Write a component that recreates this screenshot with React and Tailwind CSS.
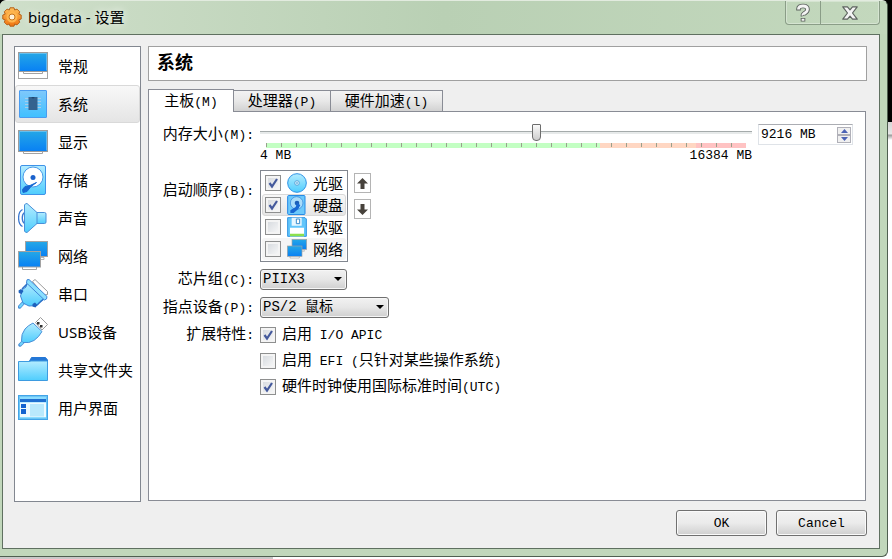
import React, { useState } from "react";

const SANS = "font-['Noto_Sans','Noto_Sans_CJK_SC',sans-serif]";
const MONO = "font-['Liberation_Mono','Noto_Sans_CJK_SC',monospace]";

// Sets the Latin runs of a mixed label in the narrower monospaced face.
function Mixed({ text }) {
  return text.split(/([ -~]+)/).filter(Boolean).map((run, i) =>
    /^[ -~]/.test(run) ? (
      <span key={i} className={"text-[13px] leading-none whitespace-pre " + MONO}>{run}</span>
    ) : (
      run
    )
  );
}

function Defs() {
  return (
    <svg width="0" height="0" className="absolute" aria-hidden="true">
      <defs>
        <linearGradient id="screen" x1="0" y1="0" x2="0" y2="1">
          <stop offset="0" stopColor="#25a8e6" />
          <stop offset="1" stopColor="#0880f4" />
        </linearGradient>
        <linearGradient id="sky" x1="0" y1="0" x2="0" y2="1">
          <stop offset="0" stopColor="#b4ecff" />
          <stop offset="1" stopColor="#4fcdfd" />
        </linearGradient>
        <linearGradient id="chip" x1="0" y1="0" x2="0" y2="1">
          <stop offset="0" stopColor="#7fc8fb" />
          <stop offset="1" stopColor="#3fc0ff" />
        </linearGradient>
        <linearGradient id="gear" x1="0" y1="0" x2="0" y2="1">
          <stop offset="0" stopColor="#ffc05a" />
          <stop offset="1" stopColor="#ef7410" />
        </linearGradient>
      </defs>
    </svg>
  );
}

const art = {
  general: (
    <>
      <rect x="0.5" y="20.5" width="29" height="7" fill="#fff" stroke="#a3a3a3" />
      <path d="M5.5 20.5v2h19v-2" fill="#fff" stroke="#a3a3a3" />
      <rect x="0.5" y="1.5" width="29" height="19" fill="url(#screen)" stroke="#9c9c9c" />
      <path d="M1.5 19.5v-17h27v17" fill="none" stroke="#8ed0f4" strokeWidth="0.6" />
    </>
  ),
  system: (
    <>
      <rect x="1.5" y="1.5" width="27" height="27" rx="0.5" fill="url(#chip)" stroke="#4a9cf0" />
      <path d="M7 9.5h16M7 12.5h16M7 15.5h16M7 18.5h16" stroke="#a5cdea" />
      <rect x="10.5" y="8" width="9" height="13" fill="#34628f" />
      <path d="M13.500 8a1.500 1.500 0 0 0 3 0z" fill="#1f4670" />
    </>
  ),
  display: (
    <>
      <path d="M5.500 24.500v2h19v-2" fill="#fff" stroke="#a3a3a3" />
      <rect x="0.5" y="3.5" width="29" height="21" fill="url(#screen)" stroke="#9c9c9c" />
      <path d="M1.500 23.500v-19h27v19" fill="none" stroke="#8ed0f4" strokeWidth="0.6" />
    </>
  ),
  storage: (
    <>
      <rect x="2.5" y="0.500" width="25" height="29" rx="1.500" fill="url(#sky)" stroke="#3f93e8" />
      <circle cx="15" cy="12" r="10" fill="#fff" stroke="#4a9ae8" />
      <circle cx="15" cy="12.500" r="2.500" fill="#1b62cc" />
      <path d="M18.500 17.500 13 21.500 9 26.500 5 27.500 4.500 24.500 7 21.500 12 20.500z" fill="#1768d2" stroke="#1768d2" strokeLinejoin="round" />
    </>
  ),
  audio: (
    <>
      <path d="M4.500 6.500C-0.700 9-0.700 21 4.500 23.500M6.500 9.500c-3 2-3 9 0 11" fill="none" stroke="#3b78d0" strokeWidth="1.300" />
      <path d="M18.500 9.500h8q1.500 0 1.500 1.500v8q0 1.500-1.500 1.500h-8z" fill="url(#sky)" stroke="#4a90d8" />
      <path d="M6.500 2Q7 .5 9 .5L19 9.500v11L9 29.500q-2 0-2.500-1.500z" fill="url(#sky)" stroke="#4a90d8" strokeLinejoin="round" />
    </>
  ),
  network: (
    <>
      <rect x="7.500" y="0.500" width="22" height="15" fill="url(#screen)" stroke="#a3a3a3" />
      <path d="M19 16.500h7v2h-7z" fill="#fff" stroke="#a3a3a3" strokeWidth="0.800" />
      <path d="M4.500 26v2.500h14V26" fill="#fff" stroke="#a3a3a3" />
      <rect x="0.500" y="10.500" width="22" height="15.500" fill="url(#screen)" stroke="#a3a3a3" />
    </>
  ),
  serial: (
    <>
      <path d="M14.500 2.500 17 .5 29.500 12.500v3L26 16z" fill="#fff" stroke="#9b9b9b" />
      <path d="M6.500 22.500 1.500 28" stroke="#4a90d8" strokeWidth="3.500" strokeLinecap="round" />
      <path d="M6.500 22.500 2 27.500" stroke="#73d6fd" strokeWidth="2" strokeLinecap="round" />
      <path d="M9 5 7 12 3 15" fill="none" stroke="#2d73c8" strokeWidth="1.500" />
      <path d="M9 3.500 26.500 20 22 22.500 19 26.500 11 27 5 24 2.500 17 4.500 10.500 8 8z" fill="url(#sky)" stroke="#3f87d8" strokeLinejoin="round" />
      <path d="M9 .8 11 .5 29 17.500 28.500 20 26.500 21 8.500 4z" fill="#8adffe" stroke="#3f87d8" strokeLinejoin="round" />
      <path d="M.5 11.500 3 10l2.500 2L3.500 15 .8 14zM14.500 25l2.500-1.500 2.500 2.500-2 2.500-3-1z" fill="#1f62bd" />
      <path d="M9 5 4 10M25 20.500 19 26" stroke="#2d73c8" strokeWidth="1.500" />
    </>
  ),
  usb: (
    <>
      <path d="M17.500 5.500 22.500 .5 29.500 7.500 24 13z" fill="#fff" stroke="#9b9b9b" />
      <rect x="19" y="5" width="2.500" height="2.500" fill="#333" />
      <rect x="22" y="8" width="2.500" height="2.500" fill="#333" />
      <path d="M6 24 2 28" stroke="#4a90d8" strokeWidth="3.500" strokeLinecap="round" />
      <path d="M6 24 2.500 27.500" stroke="#73d6fd" strokeWidth="2" strokeLinecap="round" />
      <path d="M15 6 24 14.500Q21 20 16 23.500 11 26.500 5 25.500L3.500 24Q3 17 7 12 10 8.500 15 6z" fill="url(#sky)" stroke="#4a90d8" strokeLinejoin="round" />
    </>
  ),
  folder: (
    <>
      <path d="M11 7 13.500 2.500H27.500L29.500 5v3z" fill="#2477d6" stroke="#2477d6" />
      <path d="M.5 6.500h10.500l2-.5h16.500v19.500H.5z" fill="url(#sky)" stroke="#3d9be0" />
    </>
  ),
  ui: (
    <>
      <rect x="0.500" y="2.500" width="29" height="24" fill="#8bdcff" stroke="#43a4e8" />
      <rect x="1.500" y="3.500" width="27" height="22" fill="none" stroke="#6cc6f4" />
      <rect x="2" y="6" width="26" height="3" fill="#1f6fd0" />
      <rect x="2" y="9.500" width="26" height="14.500" fill="#eefaff" />
      <path d="M3 11h5v4H3zM3 16h5v5H3z" fill="#1463cf" />
      <rect x="12" y="11" width="14" height="12.500" fill="#b9e9fc" />
    </>
  ),
  disc: (
    <>
      <circle cx="15" cy="15" r="14" fill="url(#sky)" stroke="#2e93e6" strokeWidth="1.500" />
      <circle cx="15" cy="15" r="3.500" fill="#d9f4ff" stroke="#5fa6d8" strokeWidth="1.500" />
      <circle cx="15" cy="15" r="1.200" fill="#3388c8" />
    </>
  ),
  disk: (
    <>
      <rect x="1" y="0.800" width="26" height="28.500" rx="1.500" fill="#6cc9fb" stroke="#2388e6" strokeWidth="1.500" />
      <circle cx="14.500" cy="12" r="9.500" fill="#a8dcfa" stroke="#3b8bdc" strokeWidth="1.200" />
      <circle cx="15" cy="12" r="3.500" fill="#1b5fb8" />
      <path d="M15 12 20 15 17 21 10 27H5v-4l8-5z" fill="#1768d2" />
    </>
  ),
  floppy: (
    <>
      <path d="M1 1h26l2 2v26H1z" fill="#62c6fb" stroke="#2f94e2" strokeWidth="1.500" />
      <path d="M7 1h15v12H7z" fill="#e8f7ff" />
      <path d="M14 3h5v7h-5z" fill="#fff" stroke="#3a8ccc" strokeWidth="1.500" />
      <path d="M4.500 16h21v13h-21z" fill="#fff" />
      <path d="M4.500 25h21v4h-21z" fill="#8be04e" />
    </>
  ),
};

function Icon({ name, className }) {
  return (
    <svg viewBox="0 0 30 30" className={"shrink-0 " + className} aria-hidden="true">
      {art[name]}
    </svg>
  );
}

const categories = [
  ["general", "常规"],
  ["system", "系统"],
  ["display", "显示"],
  ["storage", "存储"],
  ["audio", "声音"],
  ["network", "网络"],
  ["serial", "串口"],
  ["usb", "USB设备"],
  ["folder", "共享文件夹"],
  ["ui", "用户界面"],
];

const bootDevices = [
  ["disc", "光驱", true, "border-transparent"],
  ["disk", "硬盘", true, "border-[#d9d9d9] bg-linear-to-b from-[#f8f8f8] to-[#e6e6e6]"],
  ["floppy", "软驱", false, "border-transparent"],
  ["network", "网络", false, "border-transparent bg-[#f5f5f5]"],
];

function TickBox({ id, checked }) {
  return (
    <span className="relative size-4 shrink-0">
      <input
        id={id}
        type="checkbox"
        defaultChecked={checked}
        className="peer block size-4 appearance-none border border-[#8e8f8f] bg-linear-to-br from-[#d3d7dc] to-[#fafafa] shadow-[inset_0_0_0_2px_#f4f4f4]"
      />
      <svg viewBox="0 0 16 16" className="pointer-events-none absolute inset-0 hidden size-4 peer-checked:block" aria-hidden="true">
        <path d="M4.500 8 7 11.500 12 4" fill="none" stroke="#44599c" strokeWidth="2.200" />
      </svg>
    </span>
  );
}

function Select({ id, width, children }) {
  return (
    <span className={"relative block " + width}>
      <select
        id={id}
        className={"block h-[21px] w-full appearance-none rounded-[3px] border border-[#707070] bg-linear-to-b from-[#f2f2f2] via-[#e6e6e6] to-[#cfcfcf] pl-0.5 text-[14px] leading-[19px] shadow-[inset_0_0_0_1px_#f6f6f6] " + MONO}
      >
        {children}
      </select>
      <svg viewBox="0 0 8 4" className="pointer-events-none absolute top-2 right-[5px] h-1 w-2" aria-hidden="true">
        <path d="M0 0h8L4 4z" fill="#000" />
      </svg>
    </span>
  );
}

function Row({ label, htmlFor, labelClass = "leading-[21px]", children }) {
  return (
    <div className="flex items-start gap-1.5">
      <label htmlFor={htmlFor} className={"w-[105px] shrink-0 text-right " + labelClass}>
        <Mixed text={label} />
      </label>
      {children}
    </div>
  );
}

function MoveButton({ label, down }) {
  return (
    <button type="button" aria-label={label} className="grid h-5 w-[17px] place-items-center border border-[#b4b4b4] bg-white">
      <svg viewBox="0 0 11 11" className={"size-[11px] " + (down ? "rotate-180" : "")} aria-hidden="true">
        <path d="M5.500 0 11 5.500H7.500V11h-4V5.500H0z" fill="#47423c" />
      </svg>
    </button>
  );
}

function Feature({ id, checked, text }) {
  return (
    <div className="flex h-[19px] items-center gap-1.5 leading-[19px]">
      <TickBox id={id} checked={checked} />
      <label htmlFor={id}>
        <Mixed text={text} />
      </label>
    </div>
  );
}

function MotherboardPage() {
  const [memory, setMemory] = useState(9216);
  return (
    <div className="mr-px mb-px flex flex-1 flex-col gap-[7px] border border-[#898c95] bg-white pt-3 pr-3">
      <Row label="内存大小(M):" htmlFor="memory">
        <div className="flex h-[39px] min-w-0 flex-1 flex-col">
          <input
            id="memory"
            type="range"
            min="4"
            max="16384"
            value={memory}
            onChange={(e) => setMemory(Number(e.target.value))}
            className="block h-[17px] w-full shrink-0 appearance-none bg-transparent [&::-webkit-slider-runnable-track]:h-[3px] [&::-webkit-slider-runnable-track]:border-t [&::-webkit-slider-runnable-track]:border-[#a5abab] [&::-webkit-slider-runnable-track]:bg-[#e7eaea] [&::-webkit-slider-thumb]:-mt-2 [&::-webkit-slider-thumb]:h-[17px] [&::-webkit-slider-thumb]:w-[9px] [&::-webkit-slider-thumb]:appearance-none [&::-webkit-slider-thumb]:rounded-t-[1px] [&::-webkit-slider-thumb]:rounded-b-[4px] [&::-webkit-slider-thumb]:border [&::-webkit-slider-thumb]:border-[#6d6d6d] [&::-webkit-slider-thumb]:bg-linear-to-b [&::-webkit-slider-thumb]:from-[#fafafa] [&::-webkit-slider-thumb]:to-[#cdcdcd]"
          />
          <div className="mx-1.5 mt-0.5 h-[5px] shrink-0 bg-[linear-gradient(to_right,#c3ffc3_69.5%,#ffd7c3_69.5%,#ffd7c3_89.5%,#ffc3c3_89.5%)]">
            <div className="h-1 bg-[repeating-linear-gradient(to_right,#98a08c_0,#98a08c_1px,transparent_1px,transparent_15px)]" />
          </div>
          <div className={"flex justify-between text-[13px] leading-4 " + MONO}>
            <span>4 MB</span>
            <span>16384 MB</span>
          </div>
        </div>
        <div className="flex h-[21px] w-[95px] shrink-0 items-center border border-[#dfe3e8] border-t-[#abadb3] bg-white pr-px">
          <input type="text" aria-label="内存大小" value={memory + " MB"} readOnly className={"w-0 min-w-0 flex-1 pl-0.5 text-[13px] outline-none " + MONO} />
          <div className="flex w-[14px] flex-col">
            <button type="button" aria-label="增加" onClick={() => setMemory(memory + 4)} className="grid h-2 place-items-center border border-[#b0b0b8] bg-[#f0f0f0]">
              <svg viewBox="0 0 7 4" className="h-1 w-[7px]" aria-hidden="true"><path d="M0 4h7L3.500 0z" fill="#4b62b4" /></svg>
            </button>
            <button type="button" aria-label="减少" onClick={() => setMemory(memory - 4)} className="grid h-2 place-items-center border border-[#b0b0b8] bg-[#f0f0f0]">
              <svg viewBox="0 0 7 4" className="h-1 w-[7px]" aria-hidden="true"><path d="M0 0h7L3.500 4z" fill="#4b62b4" /></svg>
            </button>
          </div>
        </div>
      </Row>

      <Row label="启动顺序(B):" htmlFor="boot-disc" labelClass="pt-2.5 leading-[21px]">
        <ul className={"w-[88px] border border-[#828790] bg-white p-px text-[15px] " + SANS}>
          {bootDevices.map(([icon, name, checked, look]) => (
            <li key={icon} className={"flex h-[22px] items-center rounded-[3px] border pl-0.5 " + look}>
              <TickBox id={"boot-" + icon} checked={checked} />
              <label htmlFor={"boot-" + icon} className="flex items-center gap-1.5 pl-1.5 leading-5">
                <Icon name={icon} className="size-5" />
                {name}
              </label>
            </li>
          ))}
        </ul>
        <div className="flex flex-col gap-1.5 pt-[3px]">
          <MoveButton label="上移" />
          <MoveButton label="下移" down />
        </div>
      </Row>

      <Row label="芯片组(C):" htmlFor="chipset">
        <Select id="chipset" width="w-[87px]">
          <option>PIIX3</option>
        </Select>
      </Row>

      <Row label="指点设备(P):" htmlFor="pointing">
        <Select id="pointing" width="w-[129px]">
          <option>PS/2 鼠标</option>
        </Select>
      </Row>

      <Row label="扩展特性:" htmlFor="apic" labelClass="leading-[19px]">
        <div className="flex flex-col gap-[7px]">
          <Feature id="apic" checked text="启用 I/O APIC" />
          <Feature id="efi" text="启用 EFI (只针对某些操作系统)" />
          <Feature id="utc" checked text="硬件时钟使用国际标准时间(UTC)" />
        </div>
      </Row>
    </div>
  );
}

function TitleBar() {
  return (
    <header className={"flex h-[33px] items-start justify-between bg-linear-to-r from-[#cfdfca] via-[#b9d0b4] to-[#c3d8bd] pr-[7px] " + SANS}>
      <div className="flex h-8 items-center gap-1 pl-0.5">
        <svg viewBox="0 0 20 20" className="size-5" aria-hidden="true">
          <path
            d="M8 .8h4l.7 2.200 2.300-.9 2.700 2.700-.9 2.300 2.400.9v4l-2.400.9.9 2.300-2.700 2.700-2.300-.9-.7 2.200H8l-.7-2.200-2.300.9-2.700-2.700.9-2.300L.8 12V8l2.400-.9-.9-2.300L5 2.100l2.300.9z"
            fill="url(#gear)" stroke="#b5621b" strokeLinejoin="round"
          />
          <circle cx="10" cy="10" r="5.500" fill="#ffb64e" />
          <circle cx="10" cy="10" r="3" fill="#fff1d8" stroke="#c4741f" />
        </svg>
        <h1 className="pl-0.5 text-[15px] [text-shadow:0_0_8px_#fff]">bigdata - 设置</h1>
      </div>
      <div className="flex h-6 overflow-hidden rounded-b-[4px] border border-t-0 border-[#8a9d87] shadow-[inset_0_0_0_1px_#d5e4d1]">
        <button type="button" aria-label="帮助" className="grid w-[35px] place-items-center border-r border-[#8a9d87]">
          <svg viewBox="0 0 14 20" className="h-5 w-3.5" fill="none" aria-hidden="true">
            <path d="M2.500 7.500V6q0-3 4.500-3t4.500 3.500Q11.500 8.500 9 10T7 13M7 15v3.500" stroke="#5d635f" strokeWidth="4.600" />
            <path d="M2.500 6.500V6q0-3 4.500-3t4.500 3.500Q11.500 8.500 9 10T7 12.300M7 15.700v2" stroke="#f4f4f4" strokeWidth="2.800" />
          </svg>
        </button>
        <button type="button" aria-label="关闭" className="grid w-[58px] place-items-center">
          <svg viewBox="0 0 16 14" className="h-3.5 w-4" aria-hidden="true">
            <path d="M.8.8h4.700L8 3.800 10.500.8h4.700L10.500 7l4.700 6.200h-4.700L8 10.200 5.500 13.200H.8L5.500 7z" fill="#f4f4f4" stroke="#5d635f" strokeWidth="1.200" strokeLinejoin="round" />
          </svg>
        </button>
      </div>
    </header>
  );
}

const tab = "h-[21px] border border-[#898c95] bg-linear-to-b from-[#f3f3f3] via-[#e8e8e8] to-[#d2d2d2] text-center leading-[19px]";
const dialogButton =
  "h-[26px] w-[91px] rounded-[3px] border border-[#707070] bg-linear-to-b from-[#f2f2f2] from-0% via-[#ebebeb] via-50% to-[#cfcfcf] text-[13px] shadow-[inset_0_0_0_1px_#fafafa] " + MONO;

export default function App() {
  return (
    <div className="flex min-h-screen flex-col bg-white font-['Liberation_Serif','Noto_Sans_CJK_SC',serif] text-[15px] leading-[21px] text-black">
      <Defs />
      <div className="flex flex-1 bg-[linear-gradient(to_bottom,#000_122px,#d6d6d6_122px,#e8e8e8_134px,#999_135px,#fff_140px)]">
        <div className="flex flex-1 flex-col overflow-hidden rounded-t-[6px] rounded-br-[6px] border-t border-r border-b border-t-[#e2ebdf] border-r-[#4f5f50] border-b-[#4f5f50] bg-[#c1d7bb]">
          <TitleBar />
          <div className="mr-[7px] mb-[7px] ml-0.5 flex flex-1 flex-col border border-[#5f7060] bg-[#efefef] pt-[11px] pr-3 pb-3 pl-[11px]">
            <div className="flex flex-1 gap-[7px]">
              <nav className={"w-[127px] shrink-0 border border-[#828790] bg-white text-[15px] " + SANS}>
                {categories.map(([icon, name]) => (
                  <a
                    key={icon}
                    href={"#" + icon}
                    className={
                      "flex h-[38px] items-center gap-2.5 rounded-[3px] border pl-0.5 whitespace-nowrap " +
                      (icon === "system" ? "border-[#d9d9d9] bg-linear-to-b from-[#f8f8f8] to-[#e5e5e5]" : "border-transparent")
                    }
                  >
                    <Icon name={icon} className="size-[30px]" />
                    {name}
                  </a>
                ))}
              </nav>
              <main className="flex min-w-0 flex-1 flex-col">
                <h2 className="mb-2 h-[35px] border border-[#a0a0a0] bg-white pl-2 text-[18px] leading-[33px] font-bold">系统</h2>
                <div role="tablist" className="flex items-end">
                  <button type="button" role="tab" aria-selected="true" className="relative -mb-px h-[23px] w-[86px] border border-b-0 border-[#898c95] bg-white text-center leading-[21px]">
                    <Mixed text="主板(M)" />
                  </button>
                  <button type="button" role="tab" aria-selected="false" className={"w-[97px] border-b-0 border-l-0 " + tab}><Mixed text="处理器(P)" /></button>
                  <button type="button" role="tab" aria-selected="false" className={"w-[112px] border-b-0 border-l-0 " + tab}><Mixed text="硬件加速(l)" /></button>
                </div>
                <MotherboardPage />
              </main>
            </div>
            <footer className="flex justify-end gap-[9px] pt-2">
              <button type="button" className={dialogButton}>OK</button>
              <button type="button" className={dialogButton}>Cancel</button>
            </footer>
          </div>
        </div>
        <div className="w-1 shrink-0" />
      </div>
      <div className="h-0.5 w-[273px] bg-[#c9c9c9]" />
    </div>
  );
}
